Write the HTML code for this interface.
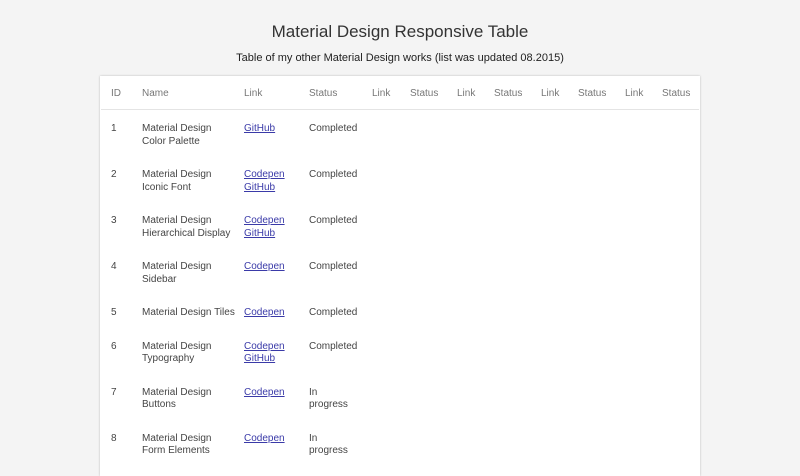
<!DOCTYPE html>
<html><head><style>
html,body{margin:0;padding:0;background:#f4f4f4;width:800px;height:450px;overflow:hidden;font-family:"Liberation Sans",sans-serif;}
h1{margin:0;position:absolute;top:22px;left:0;width:800px;text-align:center;font-weight:300;font-size:17px;color:#333;}
h2{margin:0;position:absolute;top:52px;left:0;width:800px;text-align:center;font-weight:normal;font-size:11px;color:#222;}
.card{position:absolute;left:100px;top:76px;width:600px;height:400px;background:#fff;box-shadow:0 0 2px rgba(0,0,0,.25);}
table{border-collapse:collapse;table-layout:fixed;width:598px;margin-left:1px;font-size:10px;}
th{font-weight:normal;color:#777;text-align:left;padding:2px 0 0 10px;height:31px;border-bottom:1px solid #e4e4e4;}
td{vertical-align:top;padding:13px 0 8px 10px;line-height:12.5px;color:#444;white-space:nowrap;}
a{color:#3a3aa8;text-decoration:underline;}
</style></head><body>
<h1>Material Design Responsive Table</h1>
<h2>Table of my other Material Design works (list was updated 08.2015)</h2>
<div class="card"><table>
<colgroup><col style="width:31px"><col style="width:102px"><col style="width:65px"><col style="width:63px"><col style="width:38px"><col style="width:47px"><col style="width:37px"><col style="width:47px"><col style="width:37px"><col style="width:47px"><col style="width:37px"><col style="width:47px"></colgroup>
<tr><th>ID</th><th>Name</th><th>Link</th><th>Status</th><th>Link</th><th>Status</th><th>Link</th><th>Status</th><th>Link</th><th>Status</th><th>Link</th><th>Status</th></tr>
<tr><td>1</td><td>Material Design<br>Color Palette</td><td><a>GitHub</a></td><td>Completed</td><td colspan="8"></td></tr>
<tr><td>2</td><td>Material Design<br>Iconic Font</td><td><a>Codepen</a><br><a>GitHub</a></td><td>Completed</td><td colspan="8"></td></tr>
<tr><td>3</td><td>Material Design<br>Hierarchical Display</td><td><a>Codepen</a><br><a>GitHub</a></td><td>Completed</td><td colspan="8"></td></tr>
<tr><td>4</td><td>Material Design<br>Sidebar</td><td><a>Codepen</a></td><td>Completed</td><td colspan="8"></td></tr>
<tr><td>5</td><td>Material Design Tiles</td><td><a>Codepen</a></td><td>Completed</td><td colspan="8"></td></tr>
<tr><td>6</td><td>Material Design<br>Typography</td><td><a>Codepen</a><br><a>GitHub</a></td><td>Completed</td><td colspan="8"></td></tr>
<tr><td>7</td><td>Material Design<br>Buttons</td><td><a>Codepen</a></td><td>In<br>progress</td><td colspan="8"></td></tr>
<tr><td>8</td><td>Material Design<br>Form Elements</td><td><a>Codepen</a></td><td>In<br>progress</td><td colspan="8"></td></tr>
</table></div>
</body></html>
